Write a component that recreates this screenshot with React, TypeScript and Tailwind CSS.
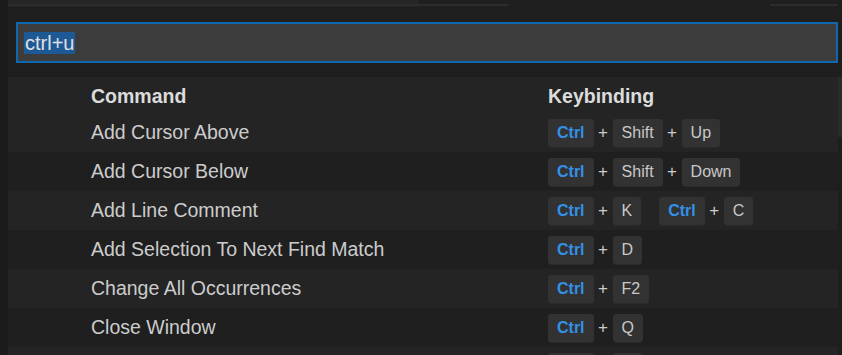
import React from "react";

type Chord = string[];

interface Row {
  command: string;
  chords: Chord[];
}

const rows: Row[] = [
  { command: "Add Cursor Above", chords: [["Ctrl", "Shift", "Up"]] },
  { command: "Add Cursor Below", chords: [["Ctrl", "Shift", "Down"]] },
  { command: "Add Line Comment", chords: [["Ctrl", "K"], ["Ctrl", "C"]] },
  { command: "Add Selection To Next Find Match", chords: [["Ctrl", "D"]] },
  { command: "Change All Occurrences", chords: [["Ctrl", "F2"]] },
  { command: "Close Window", chords: [["Ctrl", "Q"]] },
  { command: "Copy", chords: [["Ctrl", "C"]] },
];

const Key = ({ label }: { label: string }) => (
  <span
    className={`inline-flex items-center h-[28px] px-[9px] rounded-[3px] bg-[#323232] shadow-[0_1px_0_#2a2a2a] text-[16px] ${
      label === "Ctrl" ? "font-bold text-[#3391e8]" : "text-[#c8c8c8]"
    }`}
  >
    {label}
  </span>
);

const ChordView = ({ keys }: { keys: Chord }) => (
  <div className="flex items-center">
    {keys.map((k, i) => (
      <React.Fragment key={i}>
        {i > 0 && (
          <span className="w-[19px] text-center text-[17px] text-[#cccccc]">+</span>
        )}
        <Key label={k} />
      </React.Fragment>
    ))}
  </div>
);

const App = () => {
  return (
    <div className="w-[842px] h-[355px] overflow-hidden flex bg-[#1e1e1e] font-['Liberation_Sans',Arial,sans-serif]">
      <div className="w-2 shrink-0 bg-[#1b1b1b]" />
      <div className="w-[830px] shrink-0 flex flex-col">
        {/* top strip */}
        <div className="h-[7px] shrink-0 flex bg-[#1f1f1f]">
          <div className="w-[410px] h-full bg-[#262626] flex items-end pb-[1px]">
            <div className="w-full h-[2px] bg-[#2c2c2c]" />
          </div>
          <div className="w-[90px] flex items-end pb-[1px]">
            <div className="w-full h-[2px] bg-[#2c2c2c]" />
          </div>
          <div className="flex-1" />
          <div className="w-[68px] flex items-end pb-[1px]">
            <div className="w-full h-[2px] bg-[#2c2c2c]" />
          </div>
        </div>

        {/* search */}
        <div className="shrink-0 pl-2 pt-[15px] pb-[14px] bg-[#1e1e1e]">
          <div className="h-[41px] border-2 border-[#0f67ad] bg-[#3c3c3c] flex items-center pl-[6px]">
            <span className="bg-[#1d5a95] text-[#e0e0e0] text-[20px] leading-[22px] px-[1px]">
              ctrl+u
            </span>
          </div>
        </div>

        {/* header */}
        <div className="h-[36px] shrink-0 flex items-center pt-1 bg-[#242424] text-[19.5px] font-bold text-[#dcdcdc]">
          <div className="w-[540px] pl-[83px]">Command</div>
          <div>Keybinding</div>
        </div>

        {rows.map((row, i) => (
          <div
            key={i}
            className={`h-[39px] shrink-0 flex items-center text-[19.5px] text-[#cccccc] ${
              i % 2 === 0 ? "bg-[#242424]" : "bg-[#1f1f1f]"
            }`}
          >
            <div className="w-[540px] pl-[83px] whitespace-nowrap">{row.command}</div>
            <div className="flex items-center gap-[18px]">
              {row.chords.map((c, j) => (
                <ChordView key={j} keys={c} />
              ))}
            </div>
          </div>
        ))}
      </div>
      <div className="w-1 shrink-0 flex flex-col bg-[#1e1e1e]">
        <div className="h-[77px] shrink-0" />
        <div className="h-[60px] shrink-0 bg-[#2a2a2a]" />
      </div>
    </div>
  );
};

export default App;
